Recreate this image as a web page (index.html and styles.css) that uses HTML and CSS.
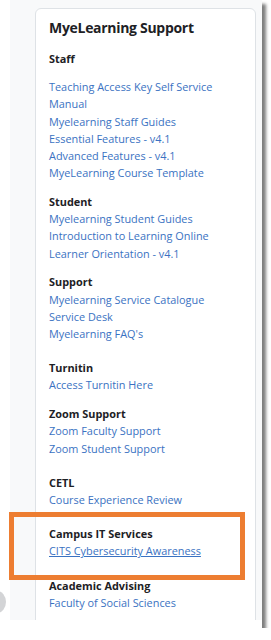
FILE: index.html
```html
<!DOCTYPE html>
<html lang="en">
<head>
    <meta charset="UTF-8">
    <meta name="viewport" content="width=device-width, initial-scale=1.0">
    <title>MyeLearning Support</title>
    <link rel="stylesheet" href="styles.css">
</head>
<body>
    <div class="shot">
        <!-- Columna lateral -->
        <div class="drawer">
            <div class="card">
                <h5 class="card-title">MyeLearning Support</h5>

                <h6 class="staff-title">Staff</h6>
                <ul class="links">
                    <li><a href="#">Teaching Access Key Self Service Manual</a></li>
                    <li><a href="#">Myelearning Staff Guides</a></li>
                    <li><a href="#">Essential Features - v4.1</a></li>
                    <li><a href="#">Advanced Features - v4.1</a></li>
                    <li><a href="#">MyeLearning Course Template</a></li>
                </ul>

                <div class="section">
                    <h6>Student</h6>
                    <ul class="links">
                        <li><a href="#">Myelearning Student Guides</a></li>
                        <li><a href="#">Introduction to Learning Online</a></li>
                        <li><a href="#">Learner Orientation - v4.1</a></li>
                    </ul>
                </div>

                <div class="section">
                    <h6>Support</h6>
                    <ul class="links">
                        <li><a href="#">Myelearning Service Catalogue</a></li>
                        <li><a href="#">Service Desk</a></li>
                        <li><a href="#">Myelearning FAQ's</a></li>
                    </ul>
                </div>

                <div class="section spaced">
                    <h6>Turnitin</h6>
                    <ul class="links">
                        <li><a href="#">Access Turnitin Here</a></li>
                    </ul>
                </div>

                <div class="section">
                    <h6>Zoom Support</h6>
                    <ul class="links">
                        <li><a href="#">Zoom Faculty Support</a></li>
                        <li><a href="#">Zoom Student Support</a></li>
                    </ul>
                </div>

                <div class="section spaced">
                    <h6>CETL</h6>
                    <ul class="links">
                        <li><a href="#">Course Experience Review</a></li>
                    </ul>
                </div>

                <div class="section spaced">
                    <h6>Campus IT Services</h6>
                    <ul class="links">
                        <li><a href="#" class="underlined">CITS Cybersecurity Awareness</a></li>
                    </ul>
                </div>

                <div class="section spaced">
                    <h6>Academic Advising</h6>
                    <ul class="links">
                        <li><a href="#">Faculty of Social Sciences</a></li>
                    </ul>
                </div>
            </div>
        </div>

        <!-- Boton flotante recortado -->
        <div class="edge-button"></div>

        <!-- Marca naranja -->
        <div class="highlight"></div>
    </div>
</body>
</html>
```

FILE: styles.css
```css
/* Estilo base */
body {
    margin: 0;
    padding: 0;
    background: #ffffff;
    font-family: "Open Sans", "Noto Sans", sans-serif;
    color: #1d2125;
}

.shot {
    position: relative;
    width: 262px;
    height: 628px;
    background: #ffffff;
    box-shadow: 4px 4px 3px rgba(0, 0, 0, 0.5);
    overflow: hidden;
}

.drawer {
    margin-left: 10px;
    height: 620px;
    padding: 8px 6px 0 25px;
    box-sizing: border-box;
    background: #f8f9fa;
    overflow: hidden;
}

.card {
    background: #ffffff;
    border: 1px solid #dee2e6;
    border-radius: 6px;
    padding: 9px 13px 40px 13px;
    min-height: 700px;
}

.card-title {
    margin: 0 0 12px 0;
    font-size: 14px;
    line-height: 20px;
    font-weight: 700;
    letter-spacing: -0.3px;
}

h6 {
    margin: 0;
    font-size: 10.9px;
    line-height: 17.2px;
    font-weight: 700;
}

.staff-title {
    margin-bottom: 11px;
}

.links {
    list-style: none;
    margin: 0;
    padding: 0;
    font-size: 10.9px;
    line-height: 17.2px;
}

.links a {
    color: #3a72c2;
    text-decoration: none;
}

.links a.underlined {
    text-decoration: underline;
}

.section {
    margin-top: 11.6px;
}

.section.spaced {
    margin-top: 17px;
}

.edge-button {
    position: absolute;
    left: -12px;
    top: 591px;
    width: 18px;
    height: 22px;
    border-radius: 50%;
    background: #d3d4d6;
}

.highlight {
    position: absolute;
    left: 9px;
    top: 512px;
    width: 236px;
    height: 68px;
    border: 5px solid #ed7d31;
    box-sizing: border-box;
}
```
